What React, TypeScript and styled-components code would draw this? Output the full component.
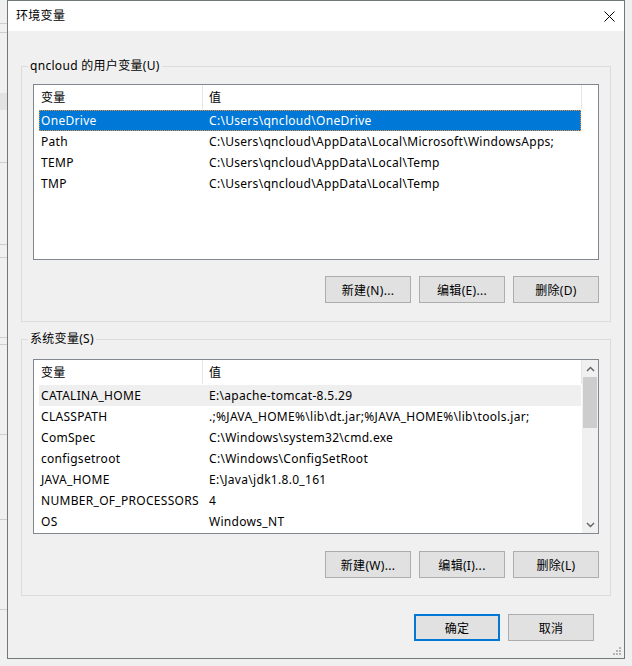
import React from "react";
import styled, { createGlobalStyle, css } from "styled-components";

const FONT = `"Noto Sans", "Noto Sans CJK SC", sans-serif`;

const GlobalStyle = createGlobalStyle`
  html, body { margin: 0; padding: 0; }
  body { font-family: ${FONT}; font-size: 12px; letter-spacing: 0.3px; color: #000; background: #f0f0f0; }
  * { box-sizing: border-box; }
`;

const Desktop = styled.div`
  position: relative;
  width: 632px;
  height: 666px;
  overflow: hidden;
  background: #f0f0f0;
`;

/* ---------- background window (peeking around the dialog) ---------- */
const BackWindow = styled.div`
  position: absolute;
  left: 0;
  top: 0;
  width: 700px;
  height: 698px;
  background: #f0f0f0;
  display: flex;
  flex-direction: column;
`;

const BackBody = styled.div`
  flex: 1;
  display: flex;
  justify-content: space-between;
`;

const Strip = styled.div`
  width: 8px;
  display: flex;
  flex-direction: column;
`;

const Rule = styled.div<{ $top: number; $color?: string }>`
  margin-top: ${(p) => p.$top}px;
  height: 1px;
  background: ${(p) => p.$color ?? "#cfcfcf"};
`;

const Band = styled.div<{ $top: number; $h: number }>`
  margin-top: ${(p) => p.$top}px;
  height: ${(p) => p.$h}px;
  background: #e3e3e3;
`;

const Slash = styled.svg`
  margin-top: 150px;
  margin-left: 1px;
`;

const BackFooter = styled.div`
  display: flex;
  gap: 9px;
  margin-left: -35px;
  padding-bottom: 25px;
`;

const BackButton = styled.div<{ $disabled?: boolean }>`
  width: 86px;
  height: 23px;
  display: flex;
  align-items: center;
  justify-content: center;
  border: 1px solid ${(p) => (p.$disabled ? "#bfbfbf" : "#adadad")};
  background: ${(p) => (p.$disabled ? "#cccccc" : "#e1e1e1")};
  color: ${(p) => (p.$disabled ? "#838383" : "#000")};
`;

/* ---------- dialog ---------- */
const Dialog = styled.div`
  position: absolute;
  left: 7px;
  top: 0;
  width: 618px;
  height: 659px;
  border: 1px solid #6f7a76;
  background: #f0f0f0;
  display: flex;
  flex-direction: column;
`;

const TitleBar = styled.div`
  height: 30px;
  background: #fff;
  display: flex;
  align-items: center;
  padding-left: 8px;
  flex-shrink: 0;
`;

const Title = styled.span`
  font-size: 12px;
  line-height: 1;
`;

const CloseBox = styled.div`
  margin-left: auto;
  width: 30px;
  height: 30px;
  display: flex;
  align-items: center;
  justify-content: center;
`;

const Content = styled.div`
  flex: 1;
  padding: 0 13px;
  display: flex;
  flex-direction: column;
  position: relative;
`;

const Group = styled.div<{ $mt: number; $pt: number; $pb: number }>`
  position: relative;
  margin-top: ${(p) => p.$mt}px;
  padding: ${(p) => p.$pt}px 11px ${(p) => p.$pb}px 11px;
  border: 1px solid #dcdcdc;
  display: flex;
  flex-direction: column;
`;

const Legend = styled.span`
  position: absolute;
  top: -9px;
  left: 6px;
  padding: 0 2px;
  background: #f0f0f0;
  line-height: 16px;
`;

const ListBox = styled.div<{ $h: number }>`
  height: ${(p) => p.$h}px;
  border: 1px solid #828790;
  background: #fff;
  display: flex;
  overflow: hidden;
`;

const ListMain = styled.div`
  flex: 1;
  display: flex;
  flex-direction: column;
`;

const Header = styled.div`
  display: grid;
  grid-template-columns: 169px 379px;
  height: 24px;
`;

const HeaderCell = styled.div<{ $pl: number }>`
  border-right: 1px solid #e5e5e5;
  padding-left: ${(p) => p.$pl}px;
  display: flex;
  align-items: center;
`;

const Rows = styled.div`
  padding: 1px 0 0 5px;
  display: flex;
  flex-direction: column;
  align-items: flex-start;
`;

const Row = styled.div<{ $state?: "selected" | "soft" }>`
  display: grid;
  grid-template-columns: 164px 378px;
  width: 542px;
  height: 21px;
  align-items: center;
  white-space: nowrap;
  ${(p) =>
    p.$state === "selected" &&
    css`
      background: #0078d7;
      color: #fff;
      outline: 1px dotted #f0902a;
      outline-offset: -1px;
    `}
  ${(p) =>
    p.$state === "soft" &&
    css`
      background: #efefef;
    `}
`;

const NameCell = styled.span`
  padding-left: 2px;
  overflow: hidden;
`;

const ValueCell = styled.span`
  padding-left: 6px;
  overflow: hidden;
`;

const ScrollBar = styled.div`
  width: 17px;
  background: #f0f0f0;
  display: flex;
  flex-direction: column;
`;

const ScrollArrow = styled.div`
  height: 17px;
  display: flex;
  align-items: center;
  justify-content: center;
`;

const Thumb = styled.div`
  height: 51px;
  margin: 0 1px;
  background: #cdcdcd;
`;

const ScrollSpace = styled.div`
  flex: 1;
`;

const ButtonRow = styled.div<{ $mt: number; $mr?: number }>`
  margin-top: ${(p) => p.$mt}px;
  margin-right: ${(p) => p.$mr ?? 0}px;
  display: flex;
  justify-content: flex-end;
  gap: 8px;
`;

const Button = styled.div<{ $default?: boolean }>`
  width: 86px;
  height: 27px;
  display: flex;
  align-items: center;
  justify-content: center;
  background: #e1e1e1;
  border: ${(p) => (p.$default ? "2px solid #0078d7" : "1px solid #adadad")};
  white-space: nowrap;
`;

const Grip = styled.svg`
  position: absolute;
  right: 3px;
  bottom: 3px;
`;

type Item = [string, string];

const userVars: Item[] = [
  ["OneDrive", "C:\\Users\\qncloud\\OneDrive"],
  ["Path", "C:\\Users\\qncloud\\AppData\\Local\\Microsoft\\WindowsApps;"],
  ["TEMP", "C:\\Users\\qncloud\\AppData\\Local\\Temp"],
  ["TMP", "C:\\Users\\qncloud\\AppData\\Local\\Temp"],
];

const sysVars: Item[] = [
  ["CATALINA_HOME", "E:\\apache-tomcat-8.5.29"],
  ["CLASSPATH", ".;%JAVA_HOME%\\lib\\dt.jar;%JAVA_HOME%\\lib\\tools.jar;"],
  ["ComSpec", "C:\\Windows\\system32\\cmd.exe"],
  ["configsetroot", "C:\\Windows\\ConfigSetRoot"],
  ["JAVA_HOME", "E:\\Java\\jdk1.8.0_161"],
  ["NUMBER_OF_PROCESSORS", "4"],
  ["OS", "Windows_NT"],
];

const Chevron = ({ up }: { up?: boolean }) => (
  <svg width="9" height="6" viewBox="0 0 9 6">
    <path
      d={up ? "M1 5 L4.5 1.5 L8 5" : "M1 1 L4.5 4.5 L8 1"}
      fill="none"
      stroke="#606060"
      strokeWidth="1.4"
    />
  </svg>
);

const VarList = ({
  items,
  height,
  scroll,
  selected,
  soft,
}: {
  items: Item[];
  height: number;
  scroll?: boolean;
  selected?: number;
  soft?: number;
}) => (
  <ListBox $h={height}>
    <ListMain>
      <Header>
        <HeaderCell $pl={7}>变量</HeaderCell>
        <HeaderCell $pl={6}>值</HeaderCell>
      </Header>
      <Rows>
        {items.map(([n, v], i) => (
          <Row
            key={n}
            $state={i === selected ? "selected" : i === soft ? "soft" : undefined}
          >
            <NameCell>{n}</NameCell>
            <ValueCell>{v}</ValueCell>
          </Row>
        ))}
      </Rows>
    </ListMain>
    {scroll && (
      <ScrollBar>
        <ScrollArrow>
          <Chevron up />
        </ScrollArrow>
        <Thumb />
        <ScrollSpace />
        <ScrollArrow>
          <Chevron />
        </ScrollArrow>
      </ScrollBar>
    )}
  </ListBox>
);

export default function App() {
  return (
    <Desktop>
      <GlobalStyle />
      <BackWindow>
        <BackBody>
          <Strip>
            <Rule $top={23} />
            <Rule $top={8} />
            <Band $top={60} $h={17} />
            <Rule $top={52} />
            <Rule $top={81} />
            <Rule $top={12} />
            <Rule $top={79} />
            <Rule $top={6} />
            <Rule $top={89} />
            <Rule $top={84} />
            <Rule $top={89} />
          </Strip>
          <Strip>
            <Rule $top={23} />
            <Rule $top={9} />
            <Rule $top={14} />
            <Rule $top={63} />
            <Rule $top={65} />
            <Slash width="6" height="40" viewBox="0 0 6 40">
              <path d="M5 0 L1 40" stroke="#1a6fc4" strokeWidth="2" />
            </Slash>
            <Rule $top={22} />
            <Rule $top={146} />
            <Rule $top={133} />
          </Strip>
        </BackBody>
        <BackFooter>
          <BackButton>确定</BackButton>
          <BackButton>取消</BackButton>
          <BackButton $disabled>应用(A)</BackButton>
          <BackButton>帮助(H)</BackButton>
        </BackFooter>
      </BackWindow>

      <Dialog>
        <TitleBar>
          <Title>环境变量</Title>
          <CloseBox>
            <svg width="11" height="11" viewBox="0 0 11 11">
              <path d="M0.5 0.5 L10.5 10.5 M10.5 0.5 L0.5 10.5" stroke="#000" strokeWidth="1" />
            </svg>
          </CloseBox>
        </TitleBar>
        <Content>
          <Group $mt={35} $pt={17} $pb={18}>
            <Legend>qncloud 的用户变量(U)</Legend>
            <VarList items={userVars} height={176} selected={0} />
            <ButtonRow $mt={16}>
              <Button>新建(N)...</Button>
              <Button>编辑(E)...</Button>
              <Button>删除(D)</Button>
            </ButtonRow>
          </Group>
          <Group $mt={17} $pt={19} $pb={17}>
            <Legend>系统变量(S)</Legend>
            <VarList items={sysVars} height={175} scroll soft={0} />
            <ButtonRow $mt={17}>
              <Button>新建(W)...</Button>
              <Button>编辑(I)...</Button>
              <Button>删除(L)</Button>
            </ButtonRow>
          </Group>
          <ButtonRow $mt={18} $mr={17}>
            <Button $default>确定</Button>
            <Button>取消</Button>
          </ButtonRow>
          <Grip width="8" height="8" viewBox="0 0 8 8">
            <rect x="6" y="0" width="2" height="2" fill="#b4b4b4" />
            <rect x="3" y="3" width="2" height="2" fill="#b4b4b4" />
            <rect x="6" y="3" width="2" height="2" fill="#b4b4b4" />
            <rect x="0" y="6" width="2" height="2" fill="#b4b4b4" />
            <rect x="3" y="6" width="2" height="2" fill="#b4b4b4" />
            <rect x="6" y="6" width="2" height="2" fill="#b4b4b4" />
          </Grip>
        </Content>
      </Dialog>
    </Desktop>
  );
}
